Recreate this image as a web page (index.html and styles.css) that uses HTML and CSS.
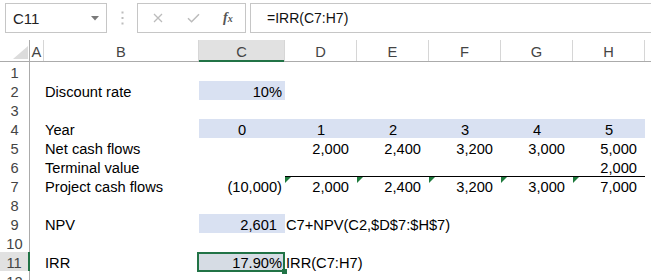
FILE: index.html
```html
<!DOCTYPE html>
<html>
<head>
<meta charset="utf-8">
<link rel="stylesheet" href="styles.css">
</head>
<body>
<div class="fbar">
  <div class="namebox"><span>C11</span><svg class="dd" width="8" height="5" viewBox="0 0 8 5"><path d="M0 0H8L4 4.5Z" fill="#7a7a7a"/></svg></div>
  <div class="vdots"><svg width="3" height="14" viewBox="0 0 3 14"><rect x="0.5" y="0.5" width="2" height="2" fill="#bdbdbd"/><rect x="0.5" y="6" width="2" height="2" fill="#bdbdbd"/><rect x="0.5" y="11.5" width="2" height="2" fill="#bdbdbd"/></svg></div>
  <div class="btns">
    <svg class="ico-x" width="10" height="10" viewBox="0 0 10 10"><path d="M1 1L9 9M9 1L1 9" stroke="#bcbcbc" stroke-width="1.3" fill="none"/></svg>
    <svg class="ico-ok" width="13" height="10" viewBox="0 0 13 10"><path d="M1 5.2L4.6 8.7L12 1.2" stroke="#bcbcbc" stroke-width="1.5" fill="none"/></svg>
    <span class="fx">f<span class="fxs">x</span></span>
  </div>
  <div class="finput">=IRR(C7:H7)</div>
</div>
<div class="sheet">
  <div class="row hdr">
    <div class="corner"><svg width="15" height="13" viewBox="0 0 15 13"><path d="M15 0V13H0Z" fill="#dcdcdc"/></svg></div>
    <div>A</div><div>B</div><div class="hsel">C</div><div>D</div><div>E</div><div>F</div><div>G</div><div>H</div><div class="last"></div>
  </div>
  <div class="row"><div class="rh">1</div><div></div><div></div><div></div><div></div><div></div><div></div><div></div><div></div><div></div></div>
  <div class="row"><div class="rh">2</div><div></div><div class="txt">Discount rate</div><div class="band num pct">10%</div><div></div><div></div><div></div><div></div><div></div><div></div></div>
  <div class="row"><div class="rh">3</div><div></div><div></div><div></div><div></div><div></div><div></div><div></div><div></div><div></div></div>
  <div class="row"><div class="rh">4</div><div></div><div class="txt">Year</div><div class="band ctr">0</div><div class="band ctr">1</div><div class="band ctr">2</div><div class="band ctr">3</div><div class="band ctr">4</div><div class="band ctr">5</div><div></div></div>
  <div class="row"><div class="rh">5</div><div></div><div class="txt">Net cash flows</div><div></div><div class="num">2,000</div><div class="num">2,400</div><div class="num">3,200</div><div class="num">3,000</div><div class="num">5,000</div><div></div></div>
  <div class="row"><div class="rh">6</div><div></div><div class="txt">Terminal value</div><div></div><div></div><div></div><div></div><div></div><div class="num">2,000</div><div></div></div>
  <div class="row"><div class="rh">7</div><div></div><div class="txt">Project cash flows</div><div class="num neg">(10,000)</div><div class="num top tri">2,000</div><div class="num top tri">2,400</div><div class="num top tri">3,200</div><div class="num top tri">3,000</div><div class="num top tri">7,000</div><div></div></div>
  <div class="row"><div class="rh">8</div><div></div><div></div><div></div><div></div><div></div><div></div><div></div><div></div><div></div></div>
  <div class="row"><div class="rh">9</div><div></div><div class="txt">NPV</div><div class="band num">2,601</div><div class="txt over">C7+NPV(C2,$D$7:$H$7)</div><div></div><div></div><div></div><div></div><div></div></div>
  <div class="row"><div class="rh">10</div><div></div><div></div><div></div><div></div><div></div><div></div><div></div><div></div><div></div></div>
  <div class="row"><div class="rh rsel">11</div><div></div><div class="txt">IRR</div><div class="active num pct">17.90%</div><div class="txt over">IRR(C7:H7)</div><div></div><div></div><div></div><div></div><div></div></div>
  <div class="row"><div class="rh">12</div><div></div><div></div><div></div><div></div><div></div><div></div><div></div><div></div><div></div></div>
</div>
</body>
</html>
```
FILE: styles.css
```css
* { box-sizing: border-box; }
body {
  margin: 0;
  width: 651px;
  height: 280px;
  overflow: hidden;
  background: #fff;
  font-family: "Liberation Sans", Arial, sans-serif;
  font-size: 14.67px;
  color: #000;
}
.fbar {
  display: flex;
  align-items: flex-start;
  height: 40px;
  padding: 3px 0 0 5px;
}
.namebox {
  width: 102px;
  height: 30px;
  border: 1px solid #c6c6c6;
  display: flex;
  align-items: center;
  justify-content: space-between;
  padding: 0 7px 0 7px;
  font-size: 15px;
  color: #222;
}
.vdots {
  width: 30px;
  height: 30px;
  display: flex;
  align-items: center;
  justify-content: center;
}
.btns {
  width: 109px;
  height: 30px;
  border: 1px solid #c6c6c6;
  display: flex;
  align-items: center;
  padding-left: 15px;
}
.ico-x { margin-right: 24px; }
.ico-ok { margin-right: 23px; }
.fx {
  font-family: "Liberation Serif", "Times New Roman", serif;
  font-style: italic;
  font-size: 14px;
  color: #555;
  font-weight: bold;
}
.fxs { font-size: 10px; }
.finput {
  flex: 1;
  height: 30px;
  margin-left: 4px;
  border: 1px solid #c6c6c6;
  border-right: none;
  padding-left: 16px;
  line-height: 28px;
  font-size: 14px;
  color: #111;
}
.row {
  display: grid;
  grid-template-columns: 30px 14px 155px 86px repeat(5, 72px) 1fr;
  height: 19px;
}
.row > div {
  position: relative;
  line-height: 16px;
  padding-top: 3px;
  white-space: nowrap;
}
.hdr {
  height: 22px;
  border-bottom: 1px solid #ababab;
}
.hdr > div {
  border-right: 1px solid #d6d6d6;
  text-align: center;
  color: #444;
  padding-top: 4px;
}
.hdr > .corner {
  border-right: 1px solid #ababab;
  padding: 6px 0 0 13px;
  text-align: left;
}
.hdr > .corner svg { display: block; }
.hdr > .last { border-right: none; }
.hdr > .hsel { background: #e1e1e1; }
.hdr > .hsel::after {
  content: "";
  position: absolute;
  left: 0;
  right: 0;
  bottom: -1px;
  height: 2px;
  background: #217346;
}
.row > .rh {
  border-right: 1px solid #ababab;
  text-align: center;
  color: #444;
}
.row > .rsel {
  background: #e1e1e1;
  border-right: 2px solid #217346;
}
.txt { padding-left: 1px; }
.over { overflow: visible; z-index: 2; }
.band { background: #d9e1f2; }
.ctr { text-align: center; }
.num { text-align: right; padding-right: 8px; }
.num.neg, .num.pct { padding-right: 3px; }
.top { border-top: 1px solid #000; }
.row > .top { padding-top: 2px; }
.tri::before {
  content: "";
  position: absolute;
  left: 0;
  top: 0;
  width: 0;
  height: 0;
  border-top: 6px solid #1e7a3c;
  border-right: 6px solid transparent;
}
.active { background: #d6dce4; }
.active::after {
  content: "";
  position: absolute;
  left: -2px;
  top: 0;
  right: 0;
  bottom: -1px;
  border: 2px solid #217346;
}
.active::before {
  content: "";
  position: absolute;
  right: -2px;
  bottom: -3px;
  width: 5px;
  height: 5px;
  background: #217346;
  z-index: 3;
}
```
